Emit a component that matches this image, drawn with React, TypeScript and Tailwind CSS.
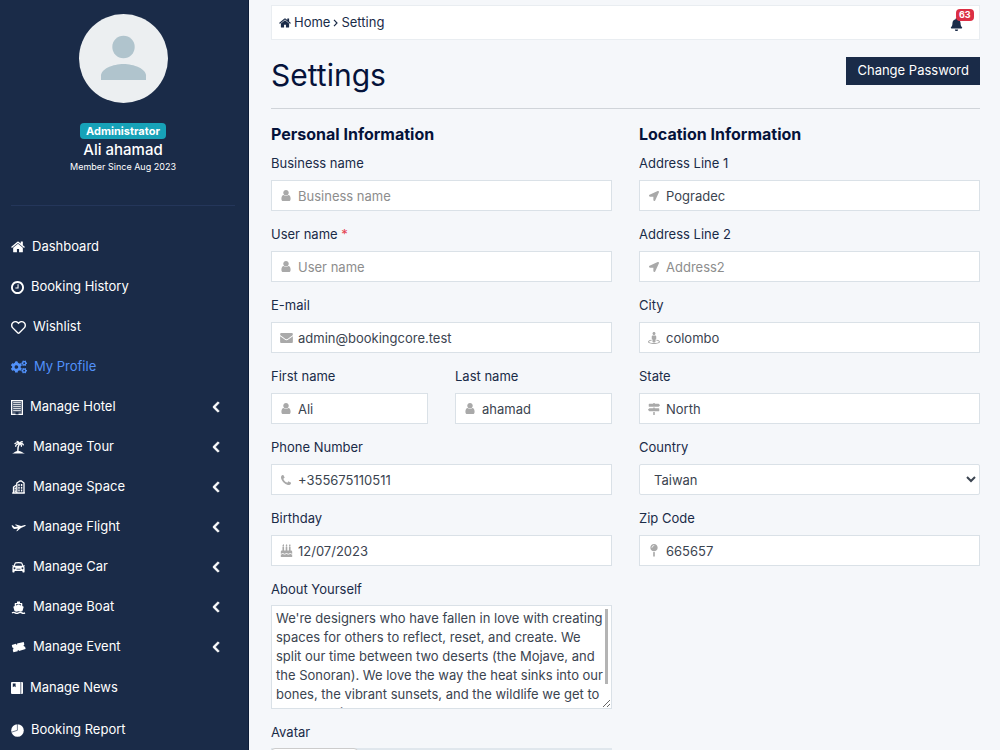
import React, { useId } from "react";
import {
  FaBell,
  FaBirthdayCake,
  FaChevronLeft,
  FaCogs,
  FaLocationArrow,
  FaMapPin,
  FaMapSigns,
  FaRegHeart,
  FaStreetView,
} from "react-icons/fa";

type GlyphProps = { className?: string };

const HomeGlyph = ({ className }: GlyphProps) => (
  <svg viewBox="64 200 1664 1400" fill="currentColor" className={className} aria-hidden="true">
    <path d="M1472 992v480q0 26-19 45t-45 19h-384v-384h-256v384h-384q-26 0-45-19t-19-45v-480q0-1 .5-3t.5-3l575-474 575 474q1 2 1 6zm223-69l-62 74q-8 9-21 11h-3q-13 0-21-7l-692-577-692 577q-12 8-24 7-13-2-21-11l-62-74q-8-10-7-23.5t11-21.5l719-599q32-26 76-26t76 26l244 204v-195q0-14 9-23t23-9h192q14 0 23 9t9 23v408l219 182q10 8 11 21.5t-7 23.5z" />
  </svg>
);

const ClockGlyph = ({ className }: GlyphProps) => (
  <svg viewBox="128 128 1536 1536" fill="currentColor" className={className} aria-hidden="true">
    <path d="M1024 544v448q0 14-9 23t-23 9h-320q-14 0-23-9t-9-23v-64q0-14 9-23t23-9h224v-352q0-14 9-23t23-9h64q14 0 23 9t9 23zm416 352q0-148-73-273t-198-198-273-73-273 73-198 198-73 273 73 273 198 198 273 73 273-73 198-198 73-273zm224 0q0 209-103 385.5t-279.5 279.5-385.5 103-385.5-103-279.5-279.5-103-385.5 103-385.5 279.5-279.5 385.5-103 385.5 103 279.5 279.5 103 385.5z" />
  </svg>
);

const UserGlyph = ({ className }: GlyphProps) => (
  <svg viewBox="256 128 1280 1536" fill="currentColor" className={className} aria-hidden="true">
    <path d="M1536 1399q0 109-62.5 187t-150.5 78h-854q-88 0-150.5-78t-62.5-187q0-85 8.5-160.5t31.5-152 58.5-131 94-89 134.5-34.5q131 128 313 128t313-128q76 0 134.5 34.5t94 89 58.5 131 31.5 152 8.5 160.5zm-256-887q0 159-112.5 271.5t-271.5 112.5-271.5-112.5-112.5-271.5 112.5-271.5 271.5-112.5 271.5 112.5 112.5 271.5z" />
  </svg>
);

const EnvelopeGlyph = ({ className }: GlyphProps) => (
  <svg viewBox="0 256 1792 1408" fill="currentColor" className={className} aria-hidden="true">
    <path d="M1792 710v794q0 66-47 113t-113 47h-1472q-66 0-113-47t-47-113v-794q44 49 101 87 362 246 497 345 57 42 92.5 65.5t94.5 48 110 24.5h2q51 0 110-24.5t94.5-48 92.5-65.5q170-123 498-345 57-39 100-87zm0-294q0 79-49 151t-122 123q-376 261-468 325-10 7-42.5 31t-54 38.5-52 32.5-57.5 27-50 9h-2q-23 0-50-9t-57.5-27-52-32.5-54-38.5-42.5-31q-91-64-262-182.5t-205-142.5q-62-42-117-115.5t-55-136.5q0-78 41.5-130t118.5-52h1472q65 0 112.5 47t47.5 113z" />
  </svg>
);

const PhoneGlyph = ({ className }: GlyphProps) => (
  <svg viewBox="192 128 1408 1408" fill="currentColor" className={className} aria-hidden="true">
    <path d="M1600 1240q0 27-10 70.5t-21 68.5q-21 50-122 106-94 51-186 51-27 0-53-3.5t-57.5-12.5-47-14.5-55.5-20.5-49-18q-98-35-175-83-127-79-264-216t-216-264q-48-77-83-175-3-9-18-49t-20.5-55.5-14.5-47-12.5-57.5-3.5-53q0-92 51-186 56-101 106-122 25-11 68.5-21t70.5-10q14 0 21 3 18 6 53 76 11 19 30 54t35 63.5 31 53.5q3 4 17.5 25t21.5 35.5 7 28.5q0 20-28.5 50t-62 55-62 53-28.5 46q0 9 5 22.5t8.5 20.5 14 24 11.5 19q76 137 174 235t235 174q2 1 19 11.5t24 14 20.5 8.5 22.5 5q18 0 46-28.5t53-62 55-62 50-28.5q14 0 28.5 7t35.5 21.5 25 17.5q25 15 53.5 31t63.5 35 54 30q70 35 76 53 3 7 3 21z" />
  </svg>
);

const HotelGlyph = ({ className }: GlyphProps) => (
  <svg viewBox="0 0 12 15" className={className} aria-hidden="true">
    <rect x="0.6" y="0.6" width="10.8" height="13.8" fill="currentColor" fillOpacity="0.25" stroke="currentColor" strokeWidth="1.2" />
    <path d="M2.2 2.5h7.600M2.2 4.5h7.600M2.2 6.5h7.600M2.2 8.5h7.600M2.2 10.5h7.600" stroke="currentColor" strokeWidth="1" opacity="0.75" />
    <path d="M4.5 12.200h3v2.200h-3z" fill="#1a2b48" />
  </svg>
);

const IslandGlyph = ({ className }: GlyphProps) => (
  <svg viewBox="0 0 15 15" fill="none" stroke="currentColor" className={className} aria-hidden="true">
    <path d="M8.6 3.600C7.2 5.600 6.6 8 6.8 11.400" strokeWidth="1.4" />
    <path d="M8.5 3.800C7 2.200 5.200 2.200 3.600 4M8.500 3.800C6.200 3.600 4.600 5 4.600 6.800M8.500 3.800C8 1.800 6.800 1.200 5.600 1.400M8.500 3.800c.6-1.800 2-2.400 3.400-1.800M8.500 3.800c2-.8 3.600 0 4 1.600M8.500 3.800c1.600.2 2.200 1.600 1.800 3" strokeWidth="1.3" />
    <path d="M1 13.500c2-.4 3.400-2.800 6.200-2.800s4.800 2.400 6.800 2.800z" fill="currentColor" stroke="none" />
  </svg>
);

const SpaceGlyph = ({ className }: GlyphProps) => (
  <svg viewBox="0 0 15 15" fill="none" stroke="currentColor" className={className} aria-hidden="true">
    <path d="M5.800 13V3L9 1h1.300l2.700 2v10" strokeWidth="1.3" />
    <path d="M5.800 4.700 2.500 7v6M1.200 13h12.600" strokeWidth="1.3" />
    <path d="M4.200 7.500v5M8 4v7.600M10.600 4v7.600" strokeWidth="1.4" strokeDasharray="2 0.7" />
  </svg>
);

const FlightGlyph = ({ className }: GlyphProps) => (
  <svg viewBox="0 0 15 15" fill="currentColor" className={className} aria-hidden="true">
    <path d="M.5 5.400l1.200-.2 1.900 1.700 3.300-.3L3.800 4.800l1.300-.3 5 1.600 2.900-.9c1-.3 1.700-.1 1.700.3s-.5.8-1.400 1.100L9.900 7.900 6.400 11l-1.200.2 1.800-2.700-3.200.4C2.600 9 1.900 8.300.5 5.400z" />
  </svg>
);

const CarGlyph = ({ className }: GlyphProps) => (
  <svg viewBox="0 0 15 15" fill="currentColor" className={className} aria-hidden="true">
    <path
      fillRule="evenodd"
      d="M3.800 2.800Q4 2.300 4.600 2.200q2.900-.4 5.800 0 .6.1.8.6l1.200 2.700 1.200-.2.3.8-.8.4q.5.6.5 1.400v3.900q0 .6-.6.600h-1q-.6 0-.6-.6v-.8H3.600v.8q0 .6-.6.600H2q-.6 0-.6-.6V7.900q0-.8.5-1.400l-.8-.4.300-.8 1.200.2zM4.700 3.400l-.9 2.300h7.400l-.9-2.300q-2.800-.4-5.600 0zM3.500 7.300a.9.9 0 1 0 .1 0zm7.900 0a.9.9 0 1 0 .1 0zM5.500 8.700h4v.8h-4z"
    />
  </svg>
);

const BoatGlyph = ({ className }: GlyphProps) => (
  <svg viewBox="0 0 15 15" fill="currentColor" className={className} aria-hidden="true">
    <path d="M6 1.500h3V3h1.800q.5 0 .5.500v2.600l1.400.6-1.300 4.500q-.9 0-1.900.6-1-.6-2-.6t-2 .6q-1-.6-1.900-.6L2.300 6.700l1.400-.6V3.500q0-.5.500-.5H6zM5 4.200v1.400l2.500-1L10 5.600V4.200z" />
    <path d="M1 12.900q1.600-1 3.200 0 1.600 1 3.300 0 1.600-1 3.300 0 1.600 1 3.200 0" fill="none" stroke="currentColor" strokeWidth="1.4" />
  </svg>
);

const TicketGlyph = ({ className }: GlyphProps) => (
  <svg viewBox="0 0 15 12" fill="currentColor" className={className} aria-hidden="true">
    <path d="M.8 3.900 4.900 2.800l.5.900.8-.2-.1-1L12.700.9l.7 2.500c-.9.3-1.200 1.600-.1 2.100l.8.200.5 2.300L8 9.900l-.5-.8-.8.200v.9l-4.300 1L1.700 8.800c1.200-.5 1-2.200-.4-2.300z" />
  </svg>
);

const NewsGlyph = ({ className }: GlyphProps) => (
  <svg viewBox="0 0 12 12" className={className} aria-hidden="true">
    <path fill="currentColor" fillRule="evenodd" d="M1 0h8.500v12H1a1 1 0 0 1-1-1V1a1 1 0 0 1 1-1zm.8 1.600v3.600l1.400-1 1.400 1V1.600z" />
    <path fill="currentColor" d="M10.200 0h.8a1 1 0 0 1 1 1v10a1 1 0 0 1-1 1h-.8z" />
  </svg>
);

const PieGlyph = ({ className }: GlyphProps) => (
  <svg viewBox="0 0 13 13" className={className} aria-hidden="true">
    <circle cx="6.500" cy="6.500" r="6.300" fill="currentColor" />
    <path d="M6.400 0v6.300L.6 8.200" fill="none" stroke="#1a2b48" strokeWidth="0.6" />
  </svg>
);

const menu: { label: string; icon: React.ReactNode; submenu?: boolean; active?: boolean; tall?: boolean }[] = [
  { label: "Dashboard", icon: <HomeGlyph className="h-3 w-3.5" /> },
  { label: "Booking History", icon: <ClockGlyph className="size-[13px]" /> },
  { label: "Wishlist", icon: <FaRegHeart className="size-[15px]" /> },
  { label: "My Profile", icon: <FaCogs className="size-4" />, active: true },
  { label: "Manage Hotel", icon: <HotelGlyph className="h-[15px] w-3" />, submenu: true },
  { label: "Manage Tour", icon: <IslandGlyph className="size-[15px]" />, submenu: true },
  { label: "Manage Space", icon: <SpaceGlyph className="size-[15px]" />, submenu: true },
  { label: "Manage Flight", icon: <FlightGlyph className="size-[15px]" />, submenu: true },
  { label: "Manage Car", icon: <CarGlyph className="size-[15px]" />, submenu: true },
  { label: "Manage Boat", icon: <BoatGlyph className="size-[15px]" />, submenu: true },
  { label: "Manage Event", icon: <TicketGlyph className="h-3 w-[15px]" />, submenu: true },
  { label: "Manage News", icon: <NewsGlyph className="size-3" />, tall: true },
  { label: "Booking Report", icon: <PieGlyph className="size-[13px]" />, tall: true },
];

function Sidebar() {
  return (
    <aside className="w-[249px] shrink-0 overflow-hidden border-r border-[#0e1d38] bg-[#1a2b48] text-white">
      <div className="mr-[13px] ml-[11px] flex flex-col items-center border-b border-[#24365a] pt-3.5 pb-8">
        <svg viewBox="0 0 89 89" className="size-[89px]" role="img" aria-label="Profile picture">
          <circle cx="44.500" cy="44.500" r="44.500" fill="#eceff1" />
          <circle cx="44.500" cy="33" r="11.200" fill="#b0c4cd" />
          <path d="M22 66v-4.500C22 55 34 50 44.500 50S67 55 67 61.500V66z" fill="#b0c4cd" />
        </svg>
        <span className="mt-5 rounded bg-[#17a2b8] px-[6px] text-[11px] leading-4 font-bold">Administrator</span>
        <strong className="text-[15px] leading-[22px] font-medium">Ali ahamad</strong>
        <span className="text-[9px] leading-3">Member Since Aug 2023</span>
      </div>
      <nav className="mt-[21px]">
        <ul>
          {menu.map((item) => (
            <li key={item.label}>
              <a
                href="#"
                className={`flex items-center gap-[7px] pr-[26px] pl-[11px] text-[13px] ${item.tall ? "h-[42px]" : "h-10"} ${
                  item.active ? "text-[#5191fa]" : "text-white"
                }`}
              >
                {item.icon}
                <span className="grow">{item.label}</span>
                {item.submenu && <FaChevronLeft className="size-3" stroke="currentColor" strokeWidth="30" />}
              </a>
            </li>
          ))}
        </ul>
      </nav>
    </aside>
  );
}

type FieldProps = {
  label: string;
  icon: React.ReactNode;
  value?: string;
  placeholder?: string;
  required?: boolean;
  type?: string;
};

function Field({ label, icon, value, placeholder, required, type = "text" }: FieldProps) {
  const id = useId();
  return (
    <div className="min-w-0">
      <label htmlFor={id} className="mb-[7px] block text-[13px] leading-5">
        {label}
        {required && <span className="text-[#e53e4f]"> *</span>}
      </label>
      <div className="flex h-[31px] items-center border border-[#dae1e7] bg-white">
        <span className="flex w-[26px] shrink-0 justify-center pl-[2px] text-[#a9a9a9]">{icon}</span>
        <input
          id={id}
          type={type}
          defaultValue={value}
          placeholder={placeholder}
          className="h-full w-full min-w-0 bg-transparent text-[13px] text-[#3b4450] outline-none placeholder:text-[#8d8d8d]"
        />
      </div>
    </div>
  );
}

const about =
  "We're designers who have fallen in love with creating spaces for others to reflect, reset, and create. We split our time between two deserts (the Mojave, and the Sonoran). We love the way the heat sinks into our bones, the vibrant sunsets, and the wildlife we get to call our neighbors.";

export default function App() {
  const user = <UserGlyph className="h-[11px] w-[10px]" />;
  const arrow = <FaLocationArrow className="size-[10px]" />;
  return (
    <div className="flex h-screen bg-[#f5f7fa] font-['Inter',sans-serif] text-[#1a2b48]">
      <Sidebar />
      <main className="min-w-0 grow overflow-y-auto pt-[5px] pr-5 pl-[22px] [scrollbar-width:none]">
        <div className="flex h-[35px] items-center justify-between border border-[#e9edf1] bg-white pr-4 pl-[7px]">
          <nav aria-label="Breadcrumb" className="flex items-center gap-[3px] text-[13px]">
            <a href="#" className="flex items-center gap-[3px]">
              <HomeGlyph className="h-[10px] w-3" />
              Home
            </a>
            <svg viewBox="0 0 5 8" className="h-2 w-[5px]" fill="none" stroke="currentColor" strokeWidth="1.2" aria-hidden="true">
              <path d="M1 .8 4 4 1 7.200" />
            </svg>
            <span>Setting</span>
          </nav>
          <button type="button" aria-label="Notifications" className="relative mt-1">
            <FaBell className="size-[13px]" />
            <span className="absolute -top-[9px] left-[6px] rounded bg-[#dc2f45] px-[3px] text-[9px] leading-3 font-bold text-white">
              63
            </span>
          </button>
        </div>

        <header className="flex items-start justify-between border-b border-[#d0d4d9] pt-[17px] pb-[15px]">
          <h1 className="text-[30px] leading-9 text-[#05133a]">Settings</h1>
          <button type="button" className="h-7 bg-[#1a2b48] px-[11px] text-[13px] text-white">
            Change Password
          </button>
        </header>

        <form className="grid grid-cols-2 gap-x-[27px] pt-[14px]">
          <section className="flex min-w-0 flex-col gap-[13px]">
            <h2 className="-mb-[5px] text-[16px] leading-[22px] font-bold text-[#05133a]">Personal Information</h2>
            <Field label="Business name" icon={user} placeholder="Business name" />
            <Field label="User name" icon={user} placeholder="User name" required />
            <Field label="E-mail" icon={<EnvelopeGlyph className="h-[10px] w-[13px]" />} value="admin@bookingcore.test" type="email" />
            <div className="grid grid-cols-2 gap-[27px]">
              <Field label="First name" icon={user} value="Ali" />
              <Field label="Last name" icon={user} value="ahamad" />
            </div>
            <Field label="Phone Number" icon={<PhoneGlyph className="size-[10px]" />} value="+355675110511" type="tel" />
            <Field label="Birthday" icon={<FaBirthdayCake className="size-[13px]" />} value="12/07/2023" />
            <div className="relative">
              <label htmlFor="about" className="mb-[6px] block text-[13px] leading-5">
                About Yourself
              </label>
              <textarea
                id="about"
                defaultValue={about}
                className="block h-[104px] w-full resize border border-[#dae1e7] bg-white px-1 pt-[3px] text-[13px] leading-[19px] text-[#3b4450] outline-none [scrollbar-width:none]"
              />
              <span className="absolute top-[30px] right-1 h-[75px] w-[3px] bg-[#b4b4b4]" aria-hidden="true" />
            </div>
            <div>
              <label htmlFor="avatar" className="mb-[6px] block text-[13px] leading-5">
                Avatar
              </label>
              <div className="flex h-[31px] bg-[#e0e7ed]">
                <label htmlFor="avatar" aria-label="Choose a picture" className="w-[87px] rounded border border-[#cccccc] bg-white" />
                <input id="avatar" type="file" className="sr-only" />
              </div>
            </div>
          </section>

          <section className="flex min-w-0 flex-col gap-[13px]">
            <h2 className="-mb-[5px] text-[16px] leading-[22px] font-bold text-[#05133a]">Location Information</h2>
            <Field label="Address Line 1" icon={arrow} value="Pogradec" />
            <Field label="Address Line 2" icon={arrow} placeholder="Address2" />
            <Field label="City" icon={<FaStreetView className="size-3" />} value="colombo" />
            <Field label="State" icon={<FaMapSigns className="size-3" />} value="North" />
            <div>
              <label htmlFor="country" className="mb-[7px] block text-[13px] leading-5">
                Country
              </label>
              <select
                id="country"
                defaultValue="Taiwan"
                className="block h-[31px] w-full rounded-xs border border-[#dae1e7] bg-white pl-[10px] text-[13px] text-[#3b4450]"
              >
                <option>Taiwan</option>
                <option>Albania</option>
                <option>Sri Lanka</option>
              </select>
            </div>
            <Field label="Zip Code" icon={<FaMapPin className="h-[13px] w-[10px]" />} value="665657" />
          </section>
        </form>
      </main>
    </div>
  );
}
